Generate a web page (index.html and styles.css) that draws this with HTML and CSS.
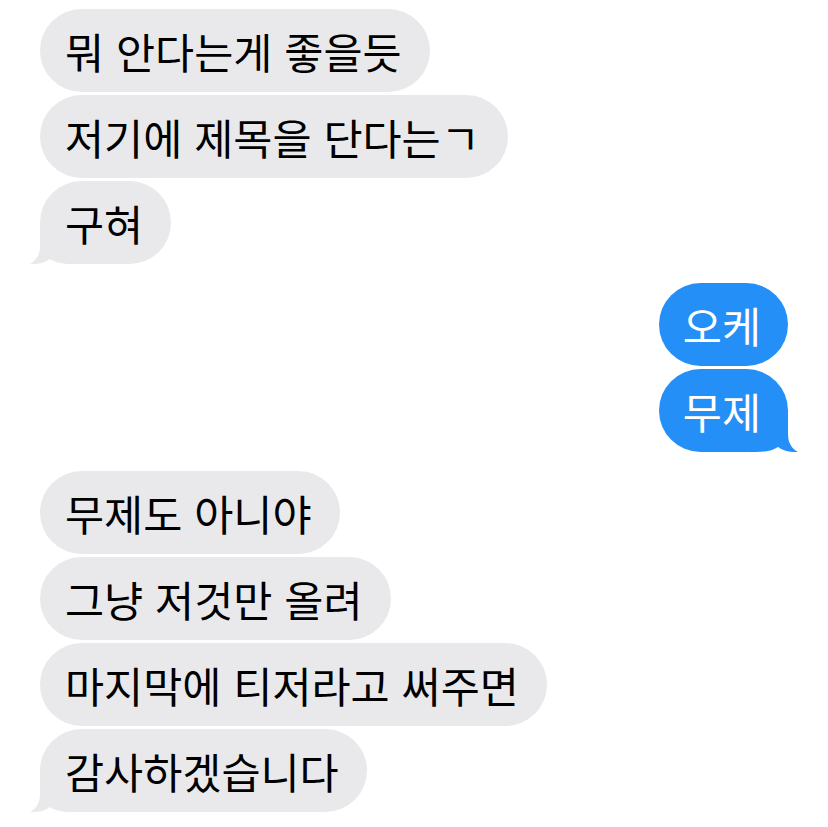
FILE: index.html
```html
<!DOCTYPE html>
<html lang="ko">
<head>
<meta charset="UTF-8">
<meta name="viewport" content="width=device-width, initial-scale=1.0">
<title>메시지</title>
<link rel="stylesheet" href="styles.css">
</head>
<body>
<div class="chat">
  <div class="group them">
    <div class="bubble"><span class="txt">뭐 안다는게 좋을듯</span></div>
    <div class="bubble"><span class="txt">저기에 제목을 단다는ㄱ</span></div>
    <div class="bubble tail">
      <svg class="tail-svg" viewBox="0 0 52 42" width="52" height="42"><rect class="erase" x="12" y="0" width="40" height="42"/><path d="M12 0 L12 24 C12 32 9 38 2 42 C10 42.5 17 40.5 22 37 C27 40.5 34 42 44 42 L52 42 L52 0 Z"/></svg>
      <span class="txt">구혀</span>
    </div>
  </div>

  <div class="group me">
    <div class="bubble"><span class="txt">오케</span></div>
    <div class="bubble tail">
      <svg class="tail-svg" viewBox="0 0 52 42" width="52" height="42"><rect class="erase" x="12" y="0" width="40" height="42"/><path d="M12 0 L12 24 C12 32 9 38 2 42 C10 42.5 17 40.5 22 37 C27 40.5 34 42 44 42 L52 42 L52 0 Z"/></svg>
      <span class="txt">무제</span>
    </div>
  </div>

  <div class="group them">
    <div class="bubble"><span class="txt">무제도 아니야</span></div>
    <div class="bubble"><span class="txt">그냥 저것만 올려</span></div>
    <div class="bubble"><span class="txt">마지막에 티저라고 써주면</span></div>
    <div class="bubble tail">
      <svg class="tail-svg" viewBox="0 0 52 42" width="52" height="42"><rect class="erase" x="12" y="0" width="40" height="42"/><path d="M12 0 L12 24 C12 32 9 38 2 42 C10 42.5 17 40.5 22 37 C27 40.5 34 42 44 42 L52 42 L52 0 Z"/></svg>
      <span class="txt">감사하겠습니다</span>
    </div>
  </div>
</div>
</body>
</html>
```

FILE: styles.css
```css
body {
  margin: 0;
  background: #fff;
  font-family: "Noto Sans CJK KR", "Noto Sans", sans-serif;
}
.chat {
  display: flex;
  flex-direction: column;
  gap: 19px;
  padding: 9px 40px 0 40px;
}
.group {
  display: flex;
  flex-direction: column;
  gap: 3px;
}
.group.them { align-items: flex-start; }
.group.me { align-items: flex-end; }

.bubble {
  position: relative;
  font-size: 42.5px;
  line-height: 49px;
  padding: 17px 28px 17px 25px;
  border-radius: 42px;
  white-space: nowrap;
}
.bubble .txt {
  position: relative;
  z-index: 1;
}
.them .bubble {
  background: #e9e9eb;
  color: #000;
}
.me .bubble {
  background: #2490f7;
  color: #fff;
  padding: 17px 27px 17px 24px;
}

/* 꼬리 달린 말풍선 */
.tail-svg {
  position: absolute;
  bottom: 0;
  left: -12px;
  z-index: 0;
}
.tail-svg .erase { fill: #fff; }
.them .tail-svg path { fill: #e9e9eb; }
.me .tail-svg {
  left: auto;
  right: -12px;
  transform: scaleX(-1);
}
.me .tail-svg path { fill: #2490f7; }
```
